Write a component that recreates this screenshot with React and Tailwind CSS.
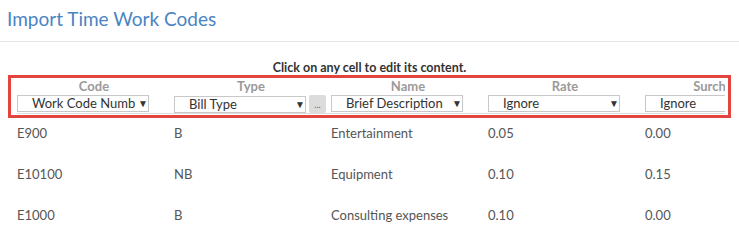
import React from 'react';

const columns = [
    { label: 'Code', value: 'Work Code Number' },
    { label: 'Type', value: 'Bill Type', extra: true },
    { label: 'Name', value: 'Brief Description' },
    { label: 'Rate', value: 'Ignore' },
    { label: 'Surcharge', value: 'Ignore' },
];

const rows = [
    ['E900', 'B', 'Entertainment', '0.05', '0.00'],
    ['E10100', 'NB', 'Equipment', '0.10', '0.15'],
    ['E1000', 'B', 'Consulting expenses', '0.10', '0.00'],
];

function FakeSelect({ value }) {
    return (
        <div className="flex h-[17px] w-[132px] shrink-0 items-center border border-[#c8c8c8] bg-white">
            <span className="block w-[117px] shrink-0 overflow-hidden whitespace-nowrap pl-[14px] text-[13px] leading-[15px] text-[#333]">
                {value}
            </span>
            <span className="ml-[3px] w-[9px] shrink-0 text-[10px] leading-[15px] text-[#333]">▼</span>
        </div>
    );
}

export default function App() {
    return (
        <div className="w-[739px] h-[249px] overflow-hidden bg-white font-['Lato',sans-serif]">
            <div className="h-[42px] border-b border-[#e6e6e6] pl-[7px] pt-[7px]">
                <h1 className="text-[19px] leading-[24px] text-[#4a84c4]">Import Time Work Codes</h1>
            </div>

            <div className="pt-[19px] text-center text-[12.5px] font-bold leading-[14px] text-[#333]">
                Click on any cell to edit its content.
            </div>

            <div className="mx-[8px] h-[43px] border-[3px] border-[#e5443e] pl-[6px] pr-[3px]">
                <div className="h-[36px] overflow-hidden border-b border-[#dcdcdc]">
                    <div className="flex w-[800px]">
                        {columns.map((col) => (
                            <div key={col.label} className="w-[157px] shrink-0">
                                <div className="w-[154px] text-center text-[13px] font-bold leading-[17px] text-[#9a9a9a]">
                                    {col.label}
                                </div>
                                <div className="flex items-center gap-[3px]">
                                    <FakeSelect value={col.value} />
                                    {col.extra && (
                                        <div className="flex h-[18px] w-[17px] items-end justify-center rounded-[2px] bg-[#dcdcdc] pb-[4px] text-[9px] leading-none text-[#666]">
                                            ...
                                        </div>
                                    )}
                                </div>
                            </div>
                        ))}
                    </div>
                </div>
            </div>

            <div className="pt-[6px] pl-[17px]">
                {rows.map((row) => (
                    <div key={row[0]} className="flex h-[41px]">
                        {row.map((cell, i) => (
                            <div key={i} className="w-[157px] shrink-0 text-[13px] leading-[18px] text-[#555]">
                                {cell}
                            </div>
                        ))}
                    </div>
                ))}
            </div>
        </div>
    );
}
